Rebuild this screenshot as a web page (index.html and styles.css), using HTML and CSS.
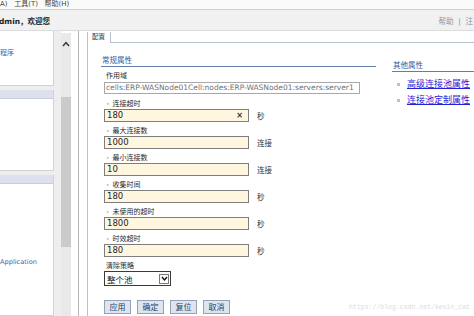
FILE: index.html
```html
<!DOCTYPE html>
<html lang="zh">
  <head>
    <meta charset="UTF-8" />
    <title>连接池</title>
    <link rel="stylesheet" href="styles.css">
  </head>
  <body>
    <div class="menubar">A)&nbsp;&nbsp;&nbsp;工具(T)&nbsp;&nbsp;&nbsp;帮助(H)</div>
    <div class="header">
      <span class="welcome">dmin，欢迎您</span>
      <span class="toplinks">帮助&nbsp;&nbsp;|&nbsp;&nbsp;注</span>
    </div>
    <div class="main">
      <div class="nav">
        <div class="navbox first"><a href="#" class="navlink">程序</a></div>
        <div class="navbox second">
          <div class="navhead"></div>
        </div>
        <div class="navbox third">
          <div class="navhead"></div>
          <a href="#" class="navlink app">Application</a>
        </div>
      </div>
      <div class="navgap"></div>
      <div class="scrollbar">
        <div class="arrow">
          <svg width="8" height="6" viewBox="0 0 8 6"><path d="M1 5 L4 1.5 L7 5" fill="none" stroke="#333" stroke-width="1.4"/></svg>
        </div>
        <div class="track-top"></div>
        <div class="thumb"></div>
      </div>
      <div class="spacer"></div>
      <div class="frame">
        <div class="tabs">
          <div class="tab">配置</div>
          <div class="tabline"></div>
        </div>
        <div class="panel">
          <div class="general">
            <div class="heading">常规属性</div>
            <div class="fields">
              <div class="label plain">作用域</div>
              <div class="scope">cells:ERP-WASNode01Cell:nodes:ERP-WASNode01:servers:server1</div>

              <div class="label"><span class="req">•</span>连接超时</div>
              <div class="row">
                <div class="input">180<span class="clear">×</span></div>
                <span class="unit">秒</span>
              </div>

              <div class="label"><span class="req">•</span>最大连接数</div>
              <div class="row">
                <div class="input">1000</div>
                <span class="unit">连接</span>
              </div>

              <div class="label"><span class="req">•</span>最小连接数</div>
              <div class="row">
                <div class="input">10</div>
                <span class="unit">连接</span>
              </div>

              <div class="label"><span class="req">•</span>收集时间</div>
              <div class="row">
                <div class="input">180</div>
                <span class="unit">秒</span>
              </div>

              <div class="label"><span class="req">•</span>未使用的超时</div>
              <div class="row">
                <div class="input">1800</div>
                <span class="unit">秒</span>
              </div>

              <div class="label"><span class="req">•</span>时效超时</div>
              <div class="row">
                <div class="input">180</div>
                <span class="unit">秒</span>
              </div>

              <div class="label plain">清除策略</div>
              <div class="select">
                <span class="select-value">整个池</span>
                <span class="select-btn">
                  <svg width="7" height="5" viewBox="0 0 7 5"><path d="M1 1 L3.5 4 L6 1" fill="none" stroke="#111" stroke-width="1.3"/></svg>
                </span>
              </div>

              <div class="buttons">
                <button type="button">应用</button>
                <button type="button">确定</button>
                <button type="button">复位</button>
                <button type="button">取消</button>
              </div>
            </div>
          </div>
          <div class="other">
            <div class="heading">其他属性</div>
            <ul class="links">
              <li><a href="#">高级连接池属性</a></li>
              <li><a href="#">连接池定制属性</a></li>
            </ul>
          </div>
        </div>
      </div>
    </div>
    <div class="watermark">https://blog.csdn.net/kevin_cat</div>
  </body>
</html>
```

FILE: styles.css
```css
body {
  margin: 0;
  width: 474px;
  height: 316px;
  overflow: hidden;
  position: relative;
  font-family: "DejaVu Sans", "Noto Sans CJK SC", sans-serif;
  font-size: 7px;
  color: #2a2a2a;
  background: #fff;
}
.menubar {
  height: 9px;
  line-height: 8px;
  background: #fafafa;
  border-bottom: 1px solid #cfcfcf;
  color: #444;
  white-space: nowrap;
}
.header {
  height: 20px;
  background: #f1f1f1;
  border-bottom: 1px solid #dcdcdc;
  display: flex;
  align-items: center;
  justify-content: space-between;
}
.welcome {
  font-weight: bold;
  font-size: 7.5px;
  color: #222;
  margin-left: -1px;
}
.toplinks {
  color: #8a96a8;
  margin-right: 1px;
  font-size: 7.5px;
  white-space: nowrap;
}
.main {
  display: flex;
  height: 285px;
}
.nav {
  width: 54px;
  background: #eeeeee;
  display: flex;
  flex-direction: column;
  gap: 4px;
  overflow: hidden;
}
.navbox {
  background: #fff;
  border-right: 1px solid #d2d2d2;
  border-bottom: 1px solid #d2d2d2;
}
.navbox.first {
  height: 54px;
}
.navbox.second {
  height: 80px;
}
.navbox.third {
  flex: 1;
}
.navhead {
  height: 8px;
  background: #dfe0ee;
  border-bottom: 1px solid #c9cbe0;
}
.navlink {
  display: block;
  color: #3a62b0;
  text-decoration: none;
  white-space: nowrap;
}
.first .navlink {
  margin-top: 16px;
}
.navlink.app {
  margin-top: 74px;
  font-size: 6.6px;
}
.navgap {
  width: 7px;
  background: #eeeeee;
}
.scrollbar {
  width: 10px;
  margin-top: 2px;
  background: #e9e9e9;
  display: flex;
  flex-direction: column;
}
.arrow {
  height: 22px;
  display: flex;
  align-items: center;
  justify-content: center;
}
.track-top {
  height: 42px;
}
.thumb {
  height: 150px;
  background: #cbcbcb;
}
.spacer {
  width: 7px;
  border-right: 1px solid #b4b4b4;
  margin-right: 8px;
}
.frame {
  flex: 1;
  border-left: 1px solid #b7c2d0;
  margin-top: 1px;
  display: flex;
  flex-direction: column;
}
.tabs {
  display: flex;
  height: 11px;
}
.tab {
  width: 18px;
  padding-left: 4px;
  border-right: 1px solid #b7c2d0;
  line-height: 11px;
  font-size: 6.5px;
  color: #333;
}
.tabline {
  flex: 1;
  border-bottom: 1px solid #b7c2d0;
}
.panel {
  display: flex;
  padding: 12px 0 0 13px;
}
.general {
  width: 275px;
}
.heading {
  line-height: 11px;
  font-size: 7.5px;
  color: #2f5a9c;
  border-bottom: 1px solid #5f7fa8;
  padding-left: 1px;
}
.fields {
  padding-left: 3px;
}
.label {
  line-height: 10px;
  margin-top: 4px;
  padding-left: 2px;
  color: #2a2a2a;
  white-space: nowrap;
}
.req {
  color: #c9b27a;
  margin-right: 3px;
  font-size: 6px;
}
.scope {
  width: 253px;
  height: 10px;
  margin-top: 1px;
  border: 1px solid #a8a8a8;
  font-size: 7.5px;
  line-height: 10px;
  color: #707070;
  padding-left: 1px;
  white-space: nowrap;
  overflow: hidden;
}
.scope + .label {
  margin-top: 5px;
}
.row {
  display: flex;
  align-items: center;
}
.input {
  width: 140px;
  height: 11px;
  padding-left: 2px;
  padding-right: 1px;
  background: #fff6e0;
  border: 1px solid #7e7e7e;
  font-size: 8.5px;
  line-height: 11px;
  color: #1e1e1e;
  display: flex;
  justify-content: space-between;
}
.clear {
  font-size: 8px;
  font-weight: bold;
  color: #333;
  margin-right: 4px;
}
.unit {
  margin-left: 8px;
  font-size: 7.5px;
  color: #333;
}
.select {
  width: 65px;
  height: 13px;
  border: 1px solid #3a3a3a;
  display: flex;
  align-items: center;
  justify-content: space-between;
  background: #fff;
}
.select-value {
  font-size: 8.5px;
  padding-left: 2px;
  color: #222;
}
.select-btn {
  width: 10px;
  height: 10px;
  margin-right: 1px;
  border: 1px solid #7a7a7a;
  display: flex;
  align-items: center;
  justify-content: center;
  box-sizing: border-box;
}
.buttons {
  display: flex;
  gap: 6px;
  margin-top: 14px;
}
button {
  width: 27px;
  height: 14px;
  padding: 0;
  background: #dfe5ee;
  border: 1px solid #93a2b8;
  font-family: "Noto Sans CJK SC", sans-serif;
  font-size: 8px;
  line-height: 12px;
  color: #24406e;
  cursor: pointer;
}
.other {
  flex: 1;
  margin-left: 16px;
  margin-top: 5px;
}
.links {
  list-style: none;
  margin: 4px 0 0;
  padding: 0 0 0 5px;
}
.links li {
  line-height: 16px;
  font-size: 9px;
  display: flex;
  align-items: center;
}
.links li::before {
  content: "";
  width: 3px;
  height: 3px;
  background: #b8bfd0;
  margin-right: 7px;
}
.links a {
  color: #1f22d6;
  text-decoration: underline;
  white-space: nowrap;
}
.watermark {
  position: absolute;
  right: 4px;
  bottom: 5px;
  font-family: "Liberation Mono", monospace;
  font-size: 6.5px;
  color: #dcdcdc;
}
```
